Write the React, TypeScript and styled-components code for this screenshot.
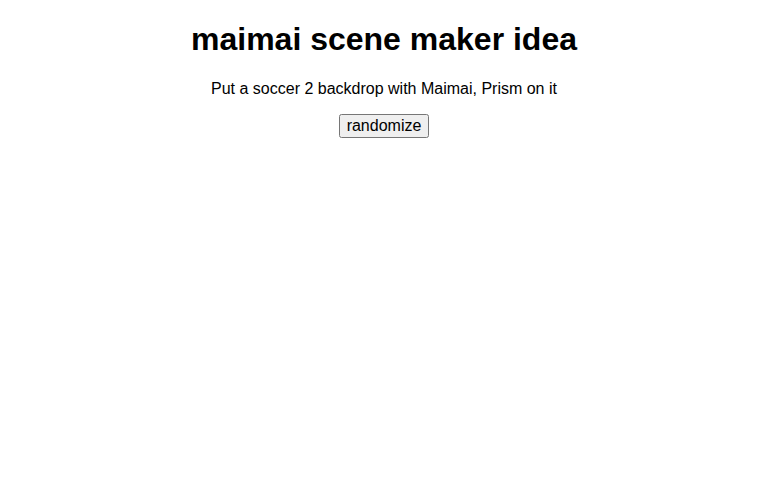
import React, { useState } from "react";
import styled, { createGlobalStyle } from "styled-components";

const GlobalStyle = createGlobalStyle`
  body {
    margin: 0;
    background: #ffffff;
    color: #000000;
    font-family: "Liberation Sans", Arial, sans-serif;
  }
`;

const Page = styled.main`
  text-align: center;
  padding: 0 8px;
`;

const Title = styled.h1`
  font-size: 32px;
  font-weight: bold;
  margin: 21.44px 0;
`;

const Idea = styled.p`
  font-size: 16px;
  margin: 16px 0;
`;

const RandomizeButton = styled.button`
  font-family: inherit;
  font-size: 16px;
`;

const backdrops = ["soccer 2", "beach", "city night", "forest"];
const characters = ["Maimai, Prism", "Salt, Otohime", "Ras, Chiffon"];

export default function App() {
  const [idea, setIdea] = useState({ backdrop: "soccer 2", cast: "Maimai, Prism" });

  const randomize = () => {
    setIdea({
      backdrop: backdrops[Math.floor(Math.random() * backdrops.length)],
      cast: characters[Math.floor(Math.random() * characters.length)],
    });
  };

  return (
    <Page>
      <GlobalStyle />
      <Title>maimai scene maker idea</Title>
      <Idea>
        Put a {idea.backdrop} backdrop with {idea.cast} on it
      </Idea>
      <RandomizeButton onClick={randomize}>randomize</RandomizeButton>
    </Page>
  );
}
